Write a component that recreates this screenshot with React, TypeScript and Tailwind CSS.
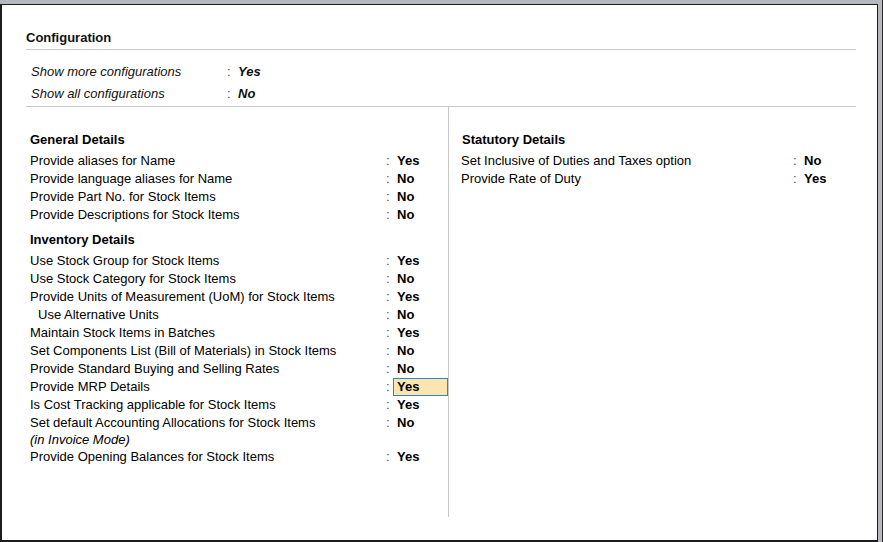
import React from "react";

type Row = {
  label: string;
  value: string;
  indent?: boolean;
  note?: string;
  active?: boolean;
};

const general: Row[] = [
  { label: "Provide aliases for Name", value: "Yes" },
  { label: "Provide language aliases for Name", value: "No" },
  { label: "Provide Part No. for Stock Items", value: "No" },
  { label: "Provide Descriptions for Stock Items", value: "No" },
];

const inventory: Row[] = [
  { label: "Use Stock Group for Stock Items", value: "Yes" },
  { label: "Use Stock Category for Stock Items", value: "No" },
  { label: "Provide Units of Measurement (UoM) for Stock Items", value: "Yes" },
  { label: "Use Alternative Units", value: "No", indent: true },
  { label: "Maintain Stock Items in Batches", value: "Yes" },
  { label: "Set Components List (Bill of Materials) in Stock Items", value: "No" },
  { label: "Provide Standard Buying and Selling Rates", value: "No" },
  { label: "Provide MRP Details", value: "Yes", active: true },
  { label: "Is Cost Tracking applicable for Stock Items", value: "Yes" },
  {
    label: "Set default Accounting Allocations for Stock Items",
    value: "No",
    note: "(in Invoice Mode)",
  },
  { label: "Provide Opening Balances for Stock Items", value: "Yes" },
];

const statutory: Row[] = [
  { label: "Set Inclusive of Duties and Taxes option", value: "No" },
  { label: "Provide Rate of Duty", value: "Yes" },
];

const Field = ({ row, labelWidth }: { row: Row; labelWidth: string }) => {
  return (
    <div>
      <div className="flex h-[18px] items-center">
        <div className={`${labelWidth} ${row.indent ? "pl-[8px]" : ""} whitespace-nowrap`}>
          {row.label}
        </div>
        <div className="w-[7px] text-[#4a4a4a]">:</div>
        <div
          className={`w-[55px] h-[18px] pl-[3px] flex items-center font-bold border ${
            row.active ? "bg-[#fde5b0] border-[#2b87c6]" : "border-transparent"
          }`}
        >
          {row.value}
        </div>
      </div>
      {row.note && <div className="h-[16px] leading-[16px] italic">{row.note}</div>}
    </div>
  );
};

const Heading = ({ title, first }: { title: string; first?: boolean }) => (
  <div className={`h-[18px] leading-[18px] font-bold mb-[3px] ${first ? "" : "mt-[7px]"}`}>
    {title}
  </div>
);

const App = () => {
  return (
    <div
      className="w-[883px] h-[542px] bg-[#b5b9bd] pt-[4px] pr-[4px] border-r border-[#2a2a2a] flex text-[13px] text-black"
      style={{ fontFamily: '"Liberation Sans", Arial, sans-serif' }}
    >
      <div className="flex-1 bg-white border-t border-r border-l-2 border-b-2 border-[#1c1c1c] pt-[24px]">
        <div className="ml-[24px] mr-[21px]">
          <div className="h-[21px] leading-[18px] font-bold border-b border-[#c8c8c8] text-[#111]">
            Configuration
          </div>
          <div className="pt-[11px] pb-[1px] border-b border-[#c8c8c8] pl-[5px] italic text-[#111]">
            {[
              ["Show more configurations", "Yes"],
              ["Show all configurations", "No"],
            ].map(([l, v]) => (
              <div key={l} className="flex h-[22px] items-center">
                <div className="w-[196px]">{l}</div>
                <div className="w-[11px] text-[#4a4a4a] not-italic">:</div>
                <div className="font-bold">{v}</div>
              </div>
            ))}
          </div>
        </div>

        <div className="flex">
          <div className="w-[447px] h-[410px] border-r border-[#c8c8c8] pl-[28px] pt-[24px]">
            <Heading title="General Details" first />
            {general.map((r) => (
              <Field key={r.label} row={r} labelWidth="w-[356px]" />
            ))}
            <Heading title="Inventory Details" />
            {inventory.map((r) => (
              <Field key={r.label} row={r} labelWidth="w-[356px]" />
            ))}
          </div>
          <div className="flex-1 pl-[12px] pt-[24px]">
            <div className="pl-[1px]">
              <Heading title="Statutory Details" first />
            </div>
            {statutory.map((r) => (
              <Field key={r.label} row={r} labelWidth="w-[332px]" />
            ))}
          </div>
        </div>
      </div>
    </div>
  );
};

export default App;
